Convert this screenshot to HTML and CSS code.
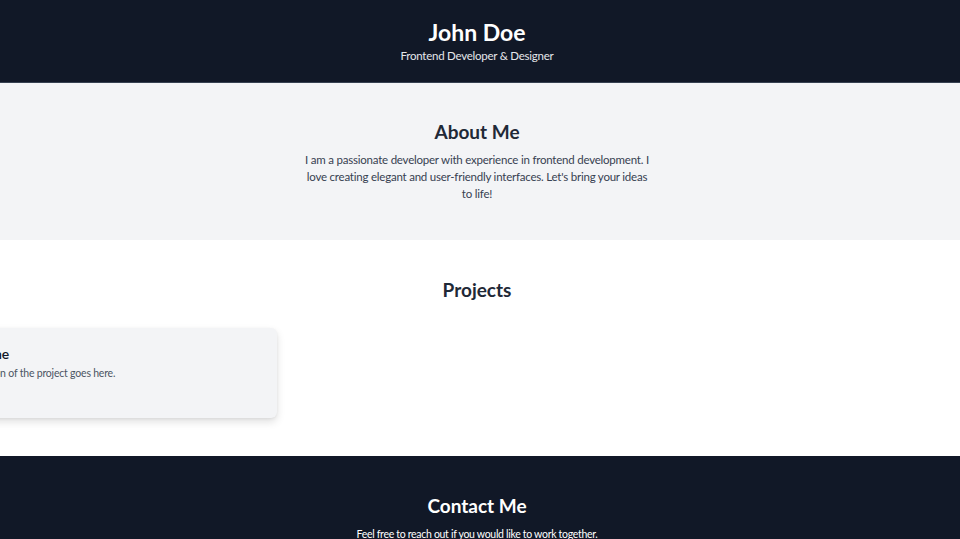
FILE: index.html
```html
<!DOCTYPE html>
<html>

<head>
    <meta charset="utf-8">
    <title>John Doe</title>
    <link rel="stylesheet" href="styles.css">
</head>

<body>
    <header class="hero">
        <h1>John Doe</h1>
        <p>Frontend Developer &amp; Designer</p>
    </header>

    <section class="about">
        <h2>About Me</h2>
        <p>I am a passionate developer with experience in frontend development. I love creating elegant and user-friendly interfaces. Let's bring your ideas to life!</p>
    </section>

    <section class="projects">
        <h2>Projects</h2>
        <div class="track">
            <div class="card">
                <h3>Project Name</h3>
                <p>A brief description of the project goes here.</p>
            </div>
        </div>
    </section>

    <section class="contact">
        <h2>Contact Me</h2>
        <p>Feel free to reach out if you would like to work together.</p>
    </section>
</body>

</html>
```

FILE: styles.css
```css
html,
body {
    margin: 0;
    padding: 0;
}

body {
    font-family: Lato, "Open Sans", sans-serif;
    background-color: #fff;
    color: #1f2937;
}

h1,
h2,
h3,
p {
    margin: 0;
}

.hero {
    background-color: #111827;
    color: #fff;
    text-align: center;
    padding: 16px 6px 18px 0;
    border-bottom: 1px solid #374151;
}

.hero h1 {
    font-size: 23px;
    line-height: 32px;
    font-weight: 700;
}

.hero p {
    font-size: 11.5px;
    line-height: 16px;
    letter-spacing: -0.25px;
    color: #e5e7eb;
}

section {
    text-align: center;
    padding-right: 6px;
}

section h2 {
    font-size: 19px;
    line-height: 28px;
    font-weight: 700;
}

.about {
    background-color: #f3f4f6;
    padding-top: 35px;
    padding-bottom: 38px;
}

.about p {
    max-width: 344px;
    margin: 5px auto 0;
    font-size: 11.5px;
    line-height: 17px;
    letter-spacing: -0.22px;
    color: #374151;
}

.projects {
    padding-top: 36px;
    padding-bottom: 38px;
    overflow: hidden;
}

.track {
    display: flex;
    margin-top: 24px;
}

.card {
    flex: 0 0 368px;
    margin-left: -91px;
    box-sizing: border-box;
    height: 90px;
    padding: 16px;
    text-align: left;
    background-color: #f3f4f6;
    border-radius: 6px;
    box-shadow: 0 4px 8px rgba(0, 0, 0, 0.12), 0 1px 3px rgba(0, 0, 0, 0.06);
}

.card h3 {
    font-size: 14px;
    line-height: 20px;
    font-weight: 600;
    color: #111827;
}

.card p {
    margin-top: 1px;
    font-size: 10.5px;
    line-height: 16px;
    letter-spacing: -0.2px;
    color: #4b5563;
}

.contact {
    background-color: #111827;
    color: #fff;
    padding-top: 36px;
    padding-bottom: 40px;
}

.contact p {
    margin-top: 6px;
    font-size: 10.5px;
    line-height: 16px;
    letter-spacing: -0.3px;
}
```
